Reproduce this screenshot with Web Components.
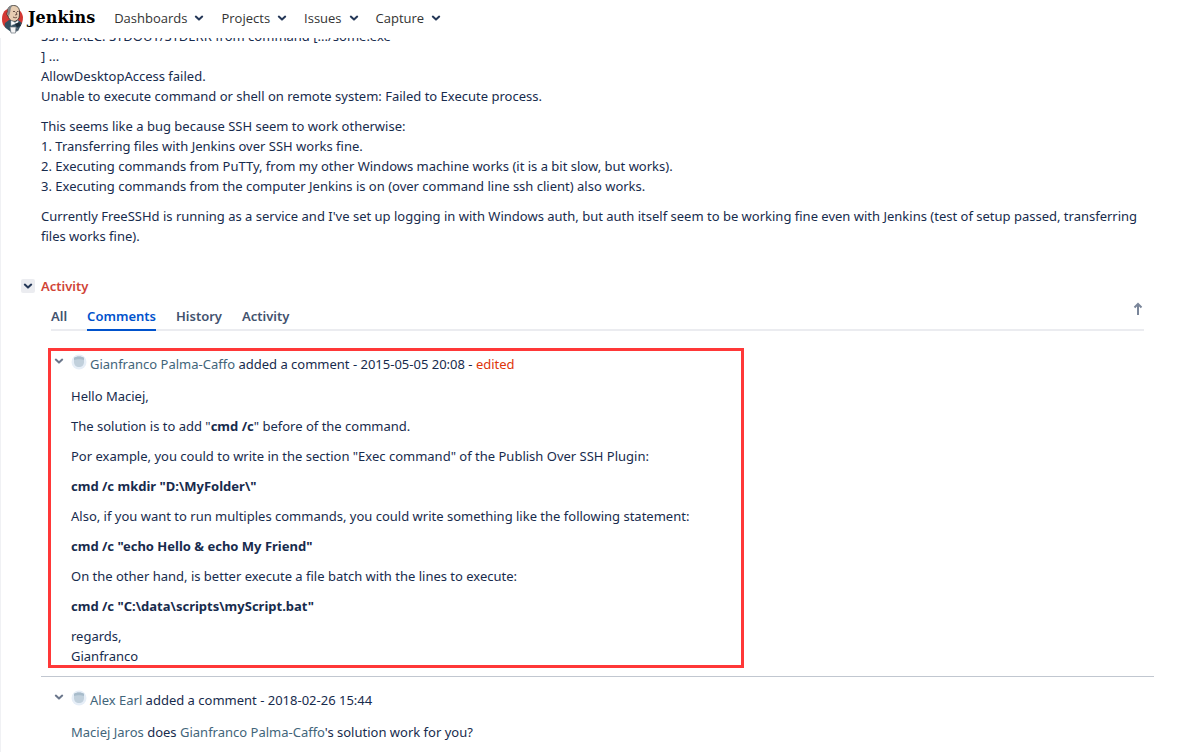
<!DOCTYPE html>
<html lang="en">
<head>
<meta charset="utf-8">
<title>Jenkins issue – Activity</title>
<style>
  :root {
    --text: #172b4d;
    --accent: #d04437;
    --blue: #0052cc;
    --rule: #ebecf0;
  }
  html { overflow: hidden; }
  body {
    margin: 0;
    background: #fff;
    color: var(--text);
    font: 13px/20px "Noto Sans", "Open Sans", sans-serif;
  }
  p { margin: 0 0 10px; }
  p:last-child { margin-bottom: 0; }
  a { color: #42657a; text-decoration: none; }
</style>
</head>
<body>
<site-header>
  <nav-menu>Dashboards</nav-menu>
  <nav-menu>Projects</nav-menu>
  <nav-menu>Issues</nav-menu>
  <nav-menu>Capture</nav-menu>
</site-header>
<issue-view>
  <issue-description>
    <p>SSH: EXEC: STDOUT/STDERR from command [.../some.exe<br>] ...<br>AllowDesktopAccess failed.<br>Unable to execute command or shell on remote system: Failed to Execute process.</p>
    <p>This seems like a bug because SSH seem to work otherwise:<br>1. Transferring files with Jenkins over SSH works fine.<br>2. Executing commands from PuTTy, from my other Windows machine works (it is a bit slow, but works).<br>3. Executing commands from the computer Jenkins is on (over command line ssh client) also works.</p>
    <p>Currently FreeSSHd is running as a service and I've set up logging in with Windows auth, but auth itself seem to be working fine even with Jenkins (test of setup passed, transferring files works fine).</p>
  </issue-description>
  <activity-panel heading="Activity">
    <activity-tabs slot="tabs"></activity-tabs>
    <issue-comment author="Gianfranco Palma-Caffo" date="2015-05-05 20:08" edited highlighted>
      <p>Hello Maciej,</p>
      <p>The solution is to add "<b>cmd /c</b>" before of the command.</p>
      <p>Por example, you could to write in the section "Exec command" of the Publish Over SSH Plugin:</p>
      <p><b>cmd /c mkdir "D:\MyFolder\"</b></p>
      <p>Also, if you want to run multiples commands, you could write something like the following statement:</p>
      <p><b>cmd /c "echo Hello &amp; echo My Friend"</b></p>
      <p>On the other hand, is better execute a file batch with the lines to execute:</p>
      <p><b>cmd /c "C:\data\scripts\myScript.bat"</b></p>
      <p>regards,<br>Gianfranco</p>
    </issue-comment>
    <issue-comment author="Alex Earl" date="2018-02-26 15:44">
      <p><a href="#maciej">Maciej Jaros</a> does <a href="#gianfranco">Gianfranco Palma-Caffo</a>'s solution work for you?</p>
    </issue-comment>
  </activity-panel>
</issue-view>

<script>
const define = (name, html, setup) => {
  const template = document.createElement('template');
  template.innerHTML = html;
  customElements.define(name, class extends HTMLElement {
    constructor() {
      super();
      this.attachShadow({ mode: 'open' }).append(template.content.cloneNode(true));
    }
    connectedCallback() { if (setup) setup(this, this.shadowRoot); }
  });
};

define('chevron-icon', `
  <style>
    :host { display: block; width: 10px; height: 10px; }
    svg { display: block; width: 100%; height: 100%; }
  </style>
  <svg viewBox="0 0 10 10" aria-hidden="true"><path d="M1.800 3.600 5 6.600 8.200 3.600" fill="none" stroke="currentColor" stroke-width="2" stroke-linecap="round" stroke-linejoin="round"/></svg>`);

define('nav-menu', `
  <style>
    :host { display: block; }
    button { display: flex; align-items: center; gap: 7px; padding: 0; border: 0; background: none; color: #253858; font: inherit; cursor: pointer; }
    span { color: #333; }
  </style>
  <button type="button" aria-haspopup="true"><span><slot></slot></span><chevron-icon></chevron-icon></button>`);

define('site-header', `
  <style>
    :host { display: flex; align-items: center; height: 38px; position: relative; z-index: 1; background: #fff; }
    .brand { display: flex; align-items: center; gap: 4px; margin: 0 19px 2px 0; color: #000; text-decoration: none; font: bold 16px/20px "DejaVu Serif", serif; }
    svg { display: block; width: 24px; height: 32px; }
    nav { display: flex; gap: 17px; padding-bottom: 2px; font-family: "Open Sans", sans-serif; }
  </style>
  <a class="brand" href="#home">
    <svg viewBox="0 0 24 32" aria-hidden="true">
      <path d="M12 6C5 6 2 11 2 17c0 4 1 7 4 9l13-1c3-2 4-6 4-10-1-6-5-9-11-9z" fill="#d33833"/>
      <path d="M9 18 5 21c-1 3 0 5 2 6l4 3 7-1 4-8-4-3-4-1z" fill="#335061"/>
      <path d="M8 9.500C7 6 10 3.500 13.500 3.500c4 0 6 2.500 6 6.500 0 3 0 5-1 7-2 2-4 3-6 2-3-1-4-3-4.500-5-1.500-1-1.500-3 0-4.500z" fill="#e6cdb2" stroke="#302d2b" stroke-width=".8"/>
      <path d="M8 9.500C7 6 9 4 12.500 3.800 10 6 11 8 10 11l-1 3c-2-1-2-3-1-4.500z" fill="#85888a"/>
      <path d="m11 18.500 4 2 3-2 1 4-3-1-5 2z" fill="#fff" stroke="#a9b3bb" stroke-width=".5"/>
      <path d="M13 9.500h2m2 0h1.500M13 15c2 1 3 1 4 0M16 10l1 2.500-2 .5" fill="none" stroke="#49312d" stroke-width=".8"/>
      <path d="m15 22 4-2 2 4-4 1z" fill="#1b2c38"/>
      <path d="M10 25h6l-.5 6H11z" fill="#f5f5f5" stroke="#6d7680" stroke-width=".7"/>
      <path d="M16 26c3 0 3 3 0 3" fill="none" stroke="#6d7680"/>
    </svg>
    <span>Jenkins</span>
  </a>
  <nav aria-label="Main"><slot></slot></nav>`);

define('issue-view', `
  <style>
    :host { display: block; margin-top: -12px; padding: 0 33px 10px 20px; border-left: 1px solid #f0f1f4; }
  </style>
  <slot></slot>`);

define('issue-description', `
  <style>:host { display: block; padding-left: 20px; }</style>
  <slot></slot>`);

define('activity-panel', `
  <style>
    :host { display: block; margin-top: 30px; }
    header { display: flex; align-items: center; gap: 6px; }
    button { display: grid; place-items: center; width: 14px; height: 14px; padding: 0; border: 0; border-radius: 2px; background: #ebecf0; color: #253858; }
    h2 { margin: 0; font: 600 13px/20px "Noto Sans", sans-serif; color: var(--accent); }
    .body { padding-left: 20px; }
  </style>
  <header><button type="button" aria-label="Collapse activity"><chevron-icon></chevron-icon></button><h2></h2></header>
  <div class="body"><slot name="tabs"></slot><slot></slot></div>`,
  (host, root) => { root.querySelector('h2').textContent = host.getAttribute('heading'); });

define('activity-tabs', `
  <style>
    :host { display: flex; justify-content: space-between; align-items: flex-start; margin: 10px 10px 0; border-bottom: 2px solid var(--rule); }
    nav { display: flex; gap: 20px; margin-bottom: -2px; font-weight: 600; }
    a { padding-bottom: 3px; border-bottom: 2px solid transparent; color: #42526e; text-decoration: none; }
    a[aria-current] { color: var(--blue); border-color: var(--blue); }
    button { display: block; width: 12px; height: 14px; margin: -4px 0 0; padding: 0; border: 0; background: none; color: #7a869a; }
    svg { display: block; width: 12px; height: 14px; }
  </style>
  <nav aria-label="Activity">
    <a href="#all">All</a><a href="#comments" aria-current="page">Comments</a><a href="#history">History</a><a href="#activity">Activity</a>
  </nav>
  <button type="button" aria-label="Newest first"><svg viewBox="0 0 12 14"><path d="M6 13V2M2.500 5.500 6 2l3.500 3.500" fill="none" stroke="currentColor" stroke-width="2"/></svg></button>`);

define('issue-comment', `
  <style>
    :host { display: block; position: relative; padding: 13px 10px 10px; }
    :host(:not([highlighted])) { border-top: 1px solid #c1c7d0; }
    :host([highlighted]) { padding-top: 23px; }
    :host([highlighted])::after { content: ""; position: absolute; box-sizing: border-box; left: 7px; top: 17px; bottom: 8px; width: 696px; max-width: 100%; border: 3px solid #ff3838; pointer-events: none; }
    header { display: flex; align-items: flex-start; }
    button { width: 10px; margin: 0 7px 0 3px; padding: 2px 0 0; border: 0; background: none; color: #6b778c; }
    .avatar { width: 16px; height: 16px; margin-right: 3px; }
    .meta { white-space: pre; }
    a { color: #42657a; text-decoration: none; }
    .edited { color: #de350b; }
    .body { padding: 12px 0 0 20px; }
  </style>
  <header>
    <button type="button" aria-label="Collapse comment"><chevron-icon></chevron-icon></button>
    <svg class="avatar" viewBox="0 0 16 16" aria-hidden="true"><circle cx="8" cy="8" r="7.500" fill="#e6eef7"/><path d="M3 4c2-2 8-2 10 0v4c0 3-2 5-5 5S3 11 3 8z" fill="#c1d0dc"/><path d="M3 4c2-2 8-2 10 0v2c-2-1-8-1-10 0z" fill="#a8bccb"/></svg>
    <span class="meta"><a href="#author"></a> added a comment - <time></time></span>
  </header>
  <div class="body"><slot></slot></div>`,
  (host, root) => {
    root.querySelector('a').textContent = host.getAttribute('author');
    root.querySelector('time').textContent = host.getAttribute('date');
    if (host.hasAttribute('edited') && !root.querySelector('.edited')) {
      const edited = document.createElement('span');
      edited.className = 'edited';
      edited.textContent = 'edited';
      root.querySelector('.meta').append(' - ', edited);
    }
  });
</script>
</body>
</html>
